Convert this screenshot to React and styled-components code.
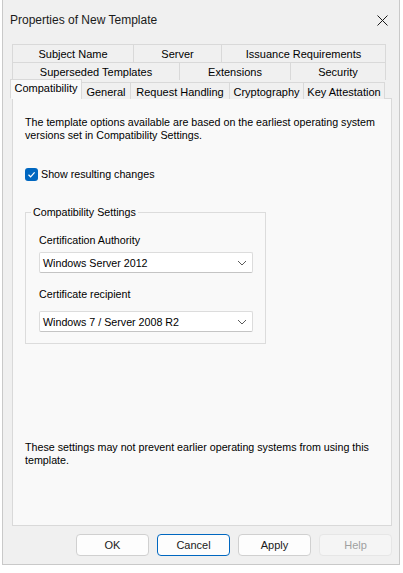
import React from 'react';
import styled, { createGlobalStyle } from 'styled-components';

const GlobalStyle = createGlobalStyle`
  html, body {
    margin: 0;
    padding: 0;
    background: #ffffff;
  }
  * {
    box-sizing: border-box;
  }
`;

const tabRows = [
  [
    { label: 'Subject Name', width: 122 },
    { label: 'Server', width: 89 },
    { label: 'Issuance Requirements', width: 165 },
  ],
  [
    { label: 'Superseded Templates', width: 168 },
    { label: 'Extensions', width: 112 },
    { label: 'Security', width: 96 },
  ],
];

const frontTabs = [
  { label: 'Compatibility', width: 72, active: true },
  { label: 'General', width: 50 },
  { label: 'Request Handling', width: 100 },
  { label: 'Cryptography', width: 75 },
  { label: 'Key Attestation', width: 82 },
];

const Chevron = () => (
  <svg width="10" height="6" viewBox="0 0 10 6">
    <path d="M1 1 L5 5 L9 1" fill="none" stroke="#5a5a5a" strokeWidth="1" />
  </svg>
);

const CloseIcon = () => (
  <svg width="11" height="11" viewBox="0 0 11 11">
    <path d="M0.5 0.5 L10.5 10.5 M10.5 0.5 L0.5 10.5" stroke="#1a1a1a" strokeWidth="1" />
  </svg>
);

const Check = () => (
  <svg width="9" height="9" viewBox="0 0 9 9">
    <path d="M1.5 4.8 L3.6 6.8 L7.6 2.4" fill="none" stroke="#ffffff" strokeWidth="1.2" />
  </svg>
);

const App = () => {
  return (
    <Page>
      <GlobalStyle />
      <Dialog>
        <TitleBar>
          <Title>Properties of New Template</Title>
          <CloseButton>
            <CloseIcon />
          </CloseButton>
        </TitleBar>

        <TabStrip>
          {tabRows.map((row, i) => (
            <TabRow key={i}>
              {row.map(t => (
                <Tab key={t.label} style={{ width: t.width }}>
                  {t.label}
                </Tab>
              ))}
            </TabRow>
          ))}
          <FrontRow>
            {frontTabs.map(t => (
              <FrontTab key={t.label} $active={t.active} style={{ width: t.width }}>
                {t.label}
              </FrontTab>
            ))}
          </FrontRow>
        </TabStrip>

        <Panel>
          <Text>
            The template options available are based on the earliest operating system
            versions set in Compatibility Settings.
          </Text>

          <CheckRow>
            <CheckBox>
              <Check />
            </CheckBox>
            <span>Show resulting changes</span>
          </CheckRow>

          <Group>
            <Legend>Compatibility Settings</Legend>
            <Label $top={15}>Certification Authority</Label>
            <Select $top={5}>
              <span>Windows Server 2012</span>
              <Chevron />
            </Select>
            <Label $top={15}>Certificate recipient</Label>
            <Select $top={10}>
              <span>Windows 7 / Server 2008 R2</span>
              <Chevron />
            </Select>
          </Group>

          <FootNote>
            These settings may not prevent earlier operating systems from using this
            template.
          </FootNote>
        </Panel>

        <ButtonRow>
          <Button>OK</Button>
          <Button $focused>Cancel</Button>
          <Button>Apply</Button>
          <Button $disabled>Help</Button>
        </ButtonRow>
      </Dialog>
    </Page>
  );
};

export default App;

const textFont = `
  font-size: 10.7px;
  line-height: 13px;
`;

const Page = styled.div`
  width: 403px;
  height: 573px;
  padding: 0 3px 8px 2px;
  font-family: 'Liberation Sans', Arial, sans-serif;
  font-size: 10.7px;
  color: #000000;
`;

const Dialog = styled.div`
  width: 398px;
  height: 565px;
  background: #f0f0f0;
  border: 1px solid #c9c9c9;
  border-top: none;
  display: flex;
  flex-direction: column;
`;

const TitleBar = styled.div`
  height: 42px;
  display: flex;
  align-items: center;
  justify-content: space-between;
  padding: 0 10px 2px 7px;
`;

const Title = styled.div`
  font-size: 12px;
  color: #1a1a1a;
`;

const CloseButton = styled.div`
  display: flex;
  align-items: center;
  padding-right: 1px;
`;

const TabStrip = styled.div`
  margin-top: 2px;
  padding-left: 7px;
  display: flex;
  flex-direction: column;
`;

const TabRow = styled.div`
  display: flex;
  padding-left: 2px;
  height: 18px;
`;

const Tab = styled.div`
  height: 18px;
  border: 1px solid #d9d9d9;
  border-bottom: none;
  margin-right: -1px;
  background: #f0f0f0;
  display: flex;
  align-items: center;
  justify-content: center;
  font-size: 11px;
  white-space: nowrap;
  padding-top: 1px;
`;

const FrontRow = styled.div`
  display: flex;
  align-items: flex-end;
  height: 19px;
  position: relative;
  z-index: 1;
  margin-bottom: -1px;
`;

const FrontTab = styled.div`
  height: ${p => (p.$active ? '20px' : '17px')};
  border: 1px solid #d9d9d9;
  border-bottom: ${p => (p.$active ? '1px solid #f9f9f9' : 'none')};
  margin-right: -1px;
  background: ${p => (p.$active ? '#f9f9f9' : '#f0f0f0')};
  display: flex;
  align-items: ${p => (p.$active ? 'flex-start' : 'center')};
  justify-content: center;
  padding-top: ${p => (p.$active ? '2px' : '1px')};
  font-size: 11px;
  white-space: nowrap;
`;

const Panel = styled.div`
  margin-left: 9px;
  width: 380px;
  height: 428px;
  background: #f9f9f9;
  border: 1px solid #d9d9d9;
  padding: 17px 12px 58px 12px;
  display: flex;
  flex-direction: column;
`;

const Text = styled.div`
  ${textFont}
`;

const CheckRow = styled.div`
  margin-top: 26px;
  display: flex;
  align-items: center;
  gap: 3px;
  ${textFont}
`;

const CheckBox = styled.div`
  width: 13px;
  height: 13px;
  border-radius: 3px;
  background: #0067c0;
  display: flex;
  align-items: center;
  justify-content: center;
`;

const Group = styled.fieldset`
  margin: 25px 0 0 0;
  width: 241px;
  border: 1px solid #dcdcdc;
  border-radius: 0;
  padding: 0 11px 11px 13px;
  display: flex;
  flex-direction: column;
`;

const Legend = styled.legend`
  margin-left: -8px;
  padding: 0 2px;
  ${textFont}
`;

const Label = styled.div`
  margin-top: ${p => p.$top}px;
  ${textFont}
`;

const Select = styled.div`
  margin-top: ${p => p.$top}px;
  width: 214px;
  height: 21px;
  background: #ffffff;
  border: 1px solid #dcdcdc;
  border-bottom-color: #c4c4c4;
  border-radius: 2px;
  display: flex;
  align-items: center;
  justify-content: space-between;
  padding: 0 5px 0 3px;
  font-size: 10.7px;
`;

const FootNote = styled.div`
  margin-top: auto;
  ${textFont}
`;

const ButtonRow = styled.div`
  margin-top: 8px;
  display: flex;
  justify-content: flex-end;
  gap: 8px;
  padding-right: 7px;
`;

const Button = styled.div`
  width: 73px;
  height: 22px;
  border-radius: 4px;
  border: 1px solid ${p => (p.$focused ? '#0067c0' : p.$disabled ? '#e6e6e6' : '#d0d0d0')};
  background: ${p => (p.$disabled ? '#f5f5f5' : '#fdfdfd')};
  color: ${p => (p.$disabled ? '#a0a0a0' : '#1a1a1a')};
  display: flex;
  align-items: center;
  justify-content: center;
  font-size: 11px;
`;
